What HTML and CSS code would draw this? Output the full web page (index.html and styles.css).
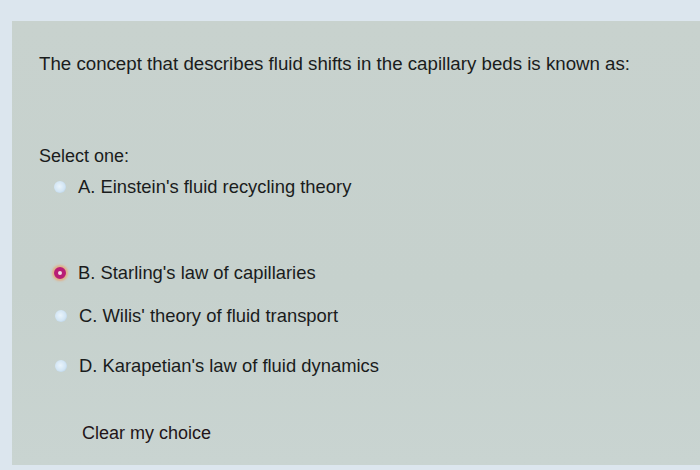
FILE: index.html
```html
<!DOCTYPE html>
<html>
<head>
<meta charset="utf-8">
<link rel="stylesheet" href="styles.css">
</head>
<body>
<div class="screen">
  <div class="panel">
    <p class="question">The concept that describes fluid shifts in the capillary beds is known as:</p>
    <p class="prompt">Select one:</p>
    <div class="options">
      <div class="opt opt-a"><span class="radio"></span><span>A. Einstein's fluid recycling theory</span></div>
      <div class="opt opt-b"><span class="radio checked"></span><span>B. Starling's law of capillaries</span></div>
      <div class="opt opt-c"><span class="radio"></span><span>C. Wilis' theory of fluid transport</span></div>
      <div class="opt opt-d"><span class="radio"></span><span>D. Karapetian's law of fluid dynamics</span></div>
    </div>
    <a class="clear">Clear my choice</a>
  </div>
</div>
</body>
</html>
```
FILE: styles.css
```css
html, body {
  margin: 0;
  padding: 0;
  width: 700px;
  height: 470px;
  overflow: hidden;
  background: #dce6ee;
  font-family: "Liberation Sans", Arial, sans-serif;
  color: #1a1c1c;
}
.screen {
  padding: 21px 0 0 12px;
  height: 470px;
  box-sizing: border-box;
}
.panel {
  background: linear-gradient(180deg, #c8d2ce 0%, #c6d1cd 60%, #c9d4d1 100%);
  height: 444px;
  padding: 0 0 0 27px;
  box-sizing: border-box;
}
.question {
  margin: 0;
  padding-top: 32px;
  font-size: 18.7px;
  line-height: 22px;
}
.prompt {
  margin: 70px 0 0 0;
  font-size: 18px;
  line-height: 22px;
}
.options {
  display: flex;
  flex-direction: column;
  margin-left: 15px;
}
.opt {
  display: flex;
  align-items: center;
  gap: 12px;
  font-size: 18.4px;
  line-height: 22px;
}
.opt-a { margin-top: 9px; }
.opt-b { margin-top: 64px; }
.opt-c { margin-top: 21px; margin-left: 1px; }
.opt-d { margin-top: 28px; margin-left: 1px; }
.radio {
  width: 12px;
  height: 12px;
  border-radius: 50%;
  background: radial-gradient(circle at 45% 45%, #eaf4fb 0%, #d2e5f4 55%, #a9c6de 100%);
  flex: none;
}
.radio.checked {
  width: 4px;
  height: 4px;
  background: #f2dde2;
  border: 4px solid #b81d76;
  box-shadow: 0 0 2px 2px rgba(245,150,80,0.55);
}
.clear {
  display: inline-block;
  margin-top: 45px;
  margin-left: 43px;
  font-size: 18px;
  line-height: 22px;
  color: #231518;
}
```
